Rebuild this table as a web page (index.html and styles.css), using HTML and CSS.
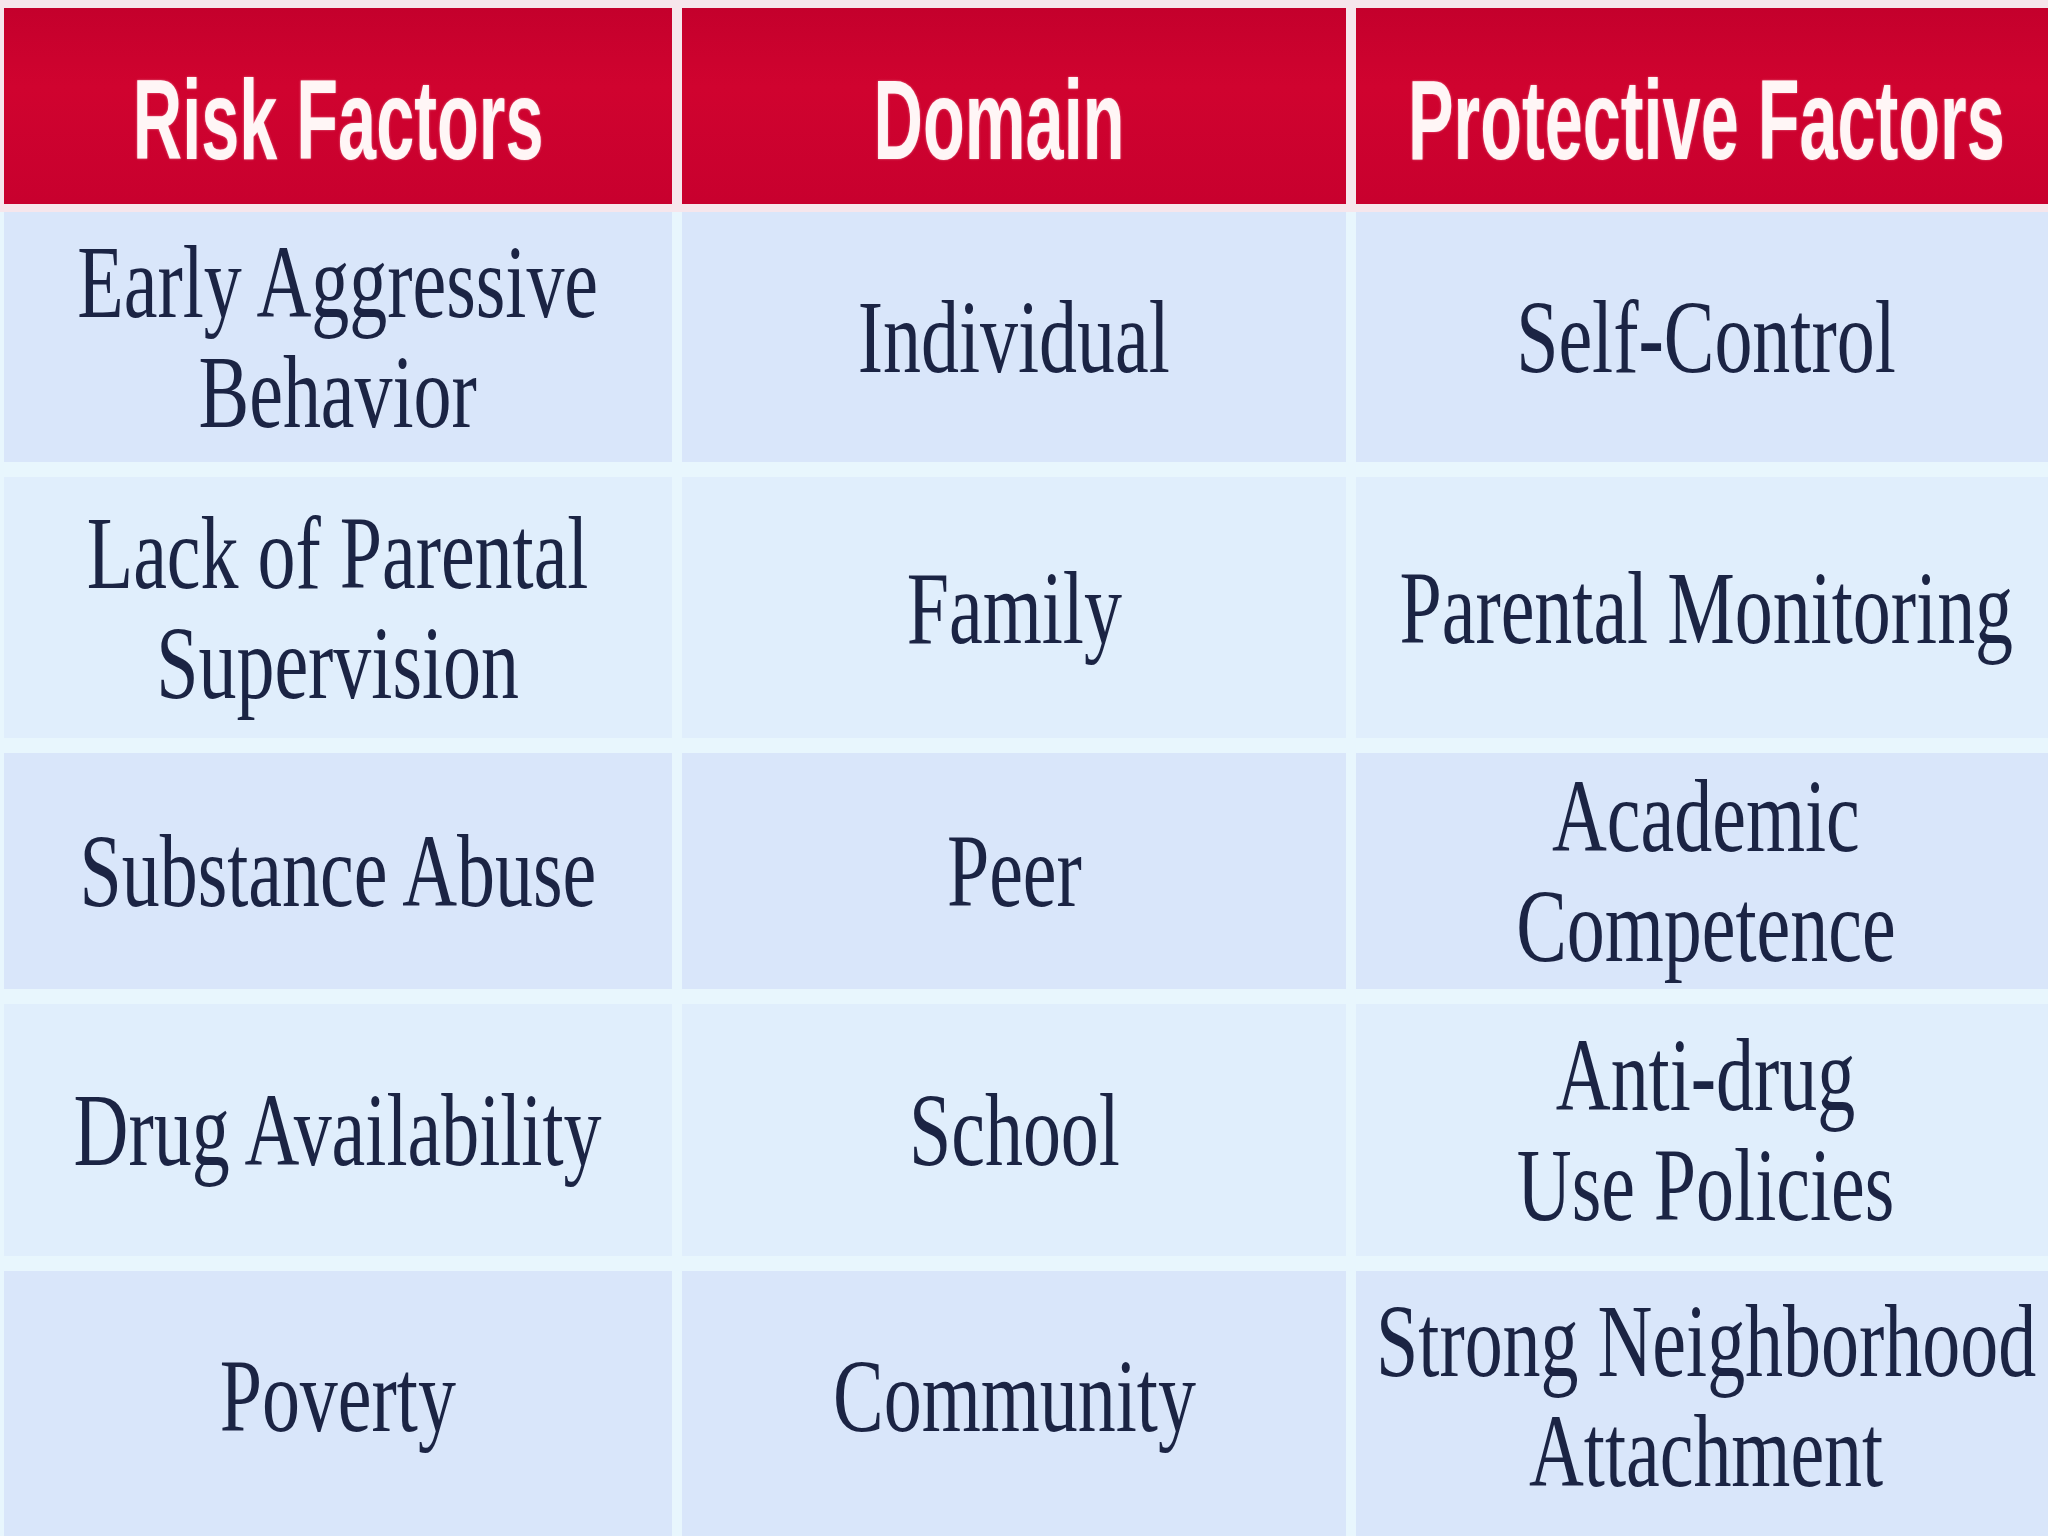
FILE: index.html
```html
<!DOCTYPE html>
<html lang="en">
<head>
<meta charset="utf-8">
<title>Risk and Protective Factors</title>
<link rel="stylesheet" href="styles.css">
</head>
<body>
<div class="sheet">
  <div class="head">
    <div class="hcell"><span class="hlabel">Risk Factors</span></div>
    <div class="hcell"><span class="hlabel">Domain</span></div>
    <div class="hcell"><span class="hlabel">Protective Factors</span></div>
  </div>
  <div class="rows">
    <div class="row r1">
      <div class="cell"><span class="txt">Early Aggressive<br>Behavior</span></div>
      <div class="cell"><span class="txt">Individual</span></div>
      <div class="cell"><span class="txt">Self-Control</span></div>
    </div>
    <div class="row r2">
      <div class="cell"><span class="txt">Lack of Parental<br>Supervision</span></div>
      <div class="cell"><span class="txt">Family</span></div>
      <div class="cell"><span class="txt">Parental Monitoring</span></div>
    </div>
    <div class="row r3">
      <div class="cell"><span class="txt">Substance Abuse</span></div>
      <div class="cell"><span class="txt">Peer</span></div>
      <div class="cell"><span class="txt">Academic<br>Competence</span></div>
    </div>
    <div class="row r4">
      <div class="cell"><span class="txt">Drug Availability</span></div>
      <div class="cell"><span class="txt">School</span></div>
      <div class="cell"><span class="txt">Anti-drug<br>Use Policies</span></div>
    </div>
    <div class="row r5">
      <div class="cell"><span class="txt">Poverty</span></div>
      <div class="cell"><span class="txt">Community</span></div>
      <div class="cell"><span class="txt">Strong Neighborhood<br>Attachment</span></div>
    </div>
  </div>
</div>
</body>
</html>
```

FILE: styles.css
```css
html, body {
  margin: 0;
  padding: 0;
  width: 2048px;
  height: 1536px;
  overflow: hidden;
  background: #e9f5fd;
}

.sheet {
  width: 2048px;
  height: 1536px;
  overflow: hidden;
  display: flex;
  flex-direction: column;
}

.head {
  display: grid;
  grid-template-columns: 668px 664px 700px;
  column-gap: 10px;
  padding: 8px 0 8px 4px;
  background: #f6e6ec;
}

.hcell {
  height: 196px;
  box-sizing: border-box;
  padding-top: 28px;
  display: flex;
  align-items: center;
  justify-content: center;
  background: linear-gradient(180deg, #c4002c 0%, #d0032f 40%, #c8002e 100%);
}

.hcell:nth-child(2) {
  padding-right: 30px;
}

.hlabel {
  display: inline-block;
  white-space: nowrap;
  font-family: "Liberation Sans", Arial, sans-serif;
  font-weight: bold;
  font-size: 114px;
  line-height: 130px;
  color: #fff6f6;
  transform: scaleX(0.6);
  text-shadow: 0 0 3px rgba(255, 200, 210, 0.6);
}

.rows {
  flex: 1;
  display: flex;
  flex-direction: column;
  row-gap: 15px;
  padding-left: 4px;
  background: #e8f6fd;
}

.row {
  display: grid;
  grid-template-columns: 668px 664px 700px;
  column-gap: 10px;
}

.r1 { height: 250px; }
.r2 { height: 261px; }
.r3 { height: 236px; }
.r4 { height: 252px; }
.r5 { flex: 1; }
.r5 .cell { padding-bottom: 15px; }

.r1 .cell, .r3 .cell, .r5 .cell { background: #d9e6fa; }
.r2 .cell, .r4 .cell { background: #e0eefc; }

.cell {
  display: flex;
  align-items: center;
  justify-content: center;
}

.txt {
  display: inline-block;
  white-space: nowrap;
  text-align: center;
  font-family: "Liberation Serif", "Times New Roman", serif;
  font-size: 104px;
  line-height: 110px;
  color: #1b2444;
  transform: scaleX(0.73);
}
```
